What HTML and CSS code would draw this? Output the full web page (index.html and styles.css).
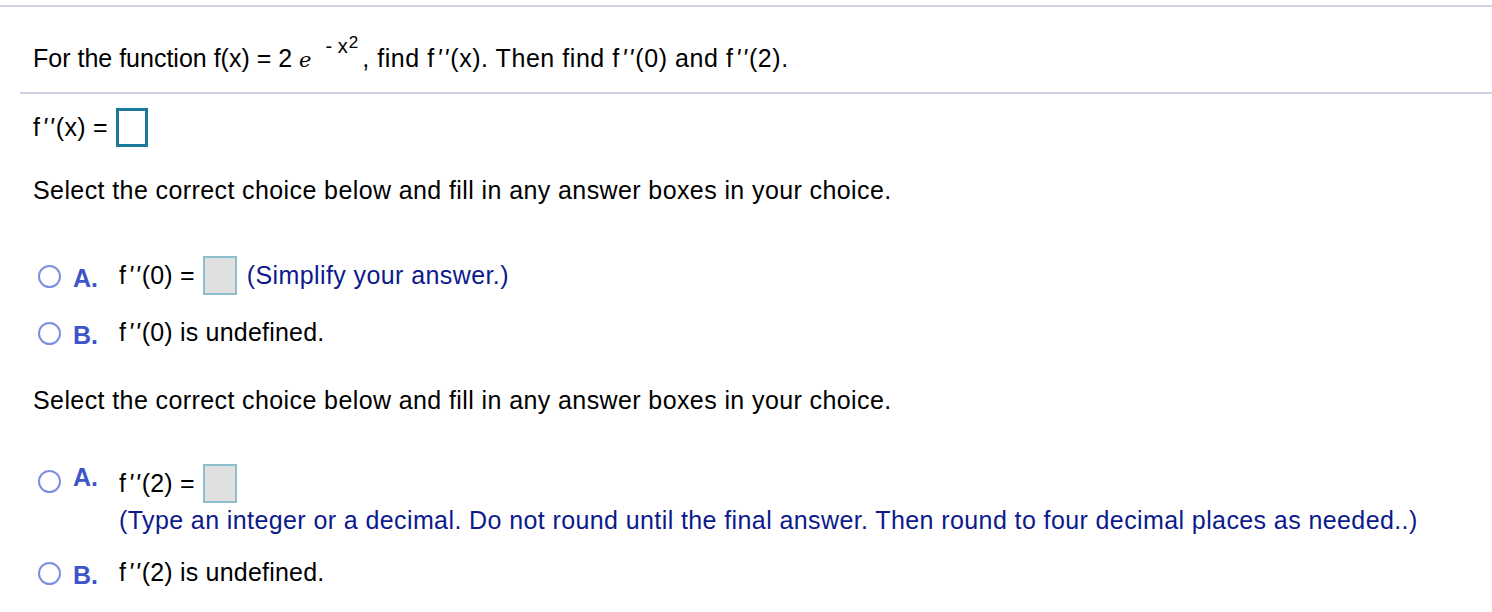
FILE: index.html
```html
<!DOCTYPE html>
<html>
<head>
<meta charset="utf-8">
<link rel="stylesheet" href="styles.css">
</head>
<body>
<div class="page">
  <div class="rule-top"></div>
  <div class="question">For the function f(x) = 2 <span class="e">e</span><span class="exp">- x<sup>2</sup></span><span class="rest">, find f<span class="pr">''</span>(x). Then find f<span class="pr">''</span>(0) and f<span class="pr">''</span>(2).</span></div>
  <div class="rule-mid"></div>
  <div class="answer-row"><span class="math big">f<span class="pr">''</span>(x) =</span><span class="box-active"></span></div>
  <p class="instr instr1">Select the correct choice below and fill in any answer boxes in your choice.</p>
  <div class="choices choices1">
    <div class="choice"><span class="radio"></span><span class="letter">A.</span><span class="math">f<span class="pr">''</span>(0) =</span><span class="box"></span><span class="hint">(Simplify your answer.)</span></div>
    <div class="choice"><span class="radio"></span><span class="letter">B.</span><span class="math">f<span class="pr">''</span>(0) is undefined.</span></div>
  </div>
  <p class="instr instr2">Select the correct choice below and fill in any answer boxes in your choice.</p>
  <div class="choices choices2">
    <div class="choice two-line">
      <span class="radio"></span><span class="letter">A.</span>
      <div class="body">
        <div class="line"><span class="math">f<span class="pr">''</span>(2) =</span><span class="box"></span></div>
        <div class="hint">(Type an integer or a decimal. Do not round until the final answer. Then round to four decimal places as needed..)</div>
      </div>
    </div>
    <div class="choice"><span class="radio"></span><span class="letter">B.</span><span class="math">f<span class="pr">''</span>(2) is undefined.</span></div>
  </div>
</div>
</body>
</html>
```

FILE: styles.css
```css
* { box-sizing: border-box; }
html, body { margin: 0; padding: 0; background: #fff; }
body {
  font-family: "Liberation Sans", Arial, sans-serif;
  font-size: 25px;
  letter-spacing: 0.4px;
  color: #000;
  width: 1492px;
  height: 612px;
  overflow: hidden;
}
.page { padding-top: 5px; }
.rule-top { height: 2px; background: #cfd2e2; }
.pr {
  font-family: "Liberation Sans", Arial, sans-serif;
  font-style: italic;
  font-size: 1em;
  letter-spacing: 2px;
  margin-left: 2px;
}
.question {
  padding: 36px 0 0 33px;
  height: 85px;
  font-size: 25px;
  letter-spacing: 0;
  line-height: 30px;
  white-space: nowrap;
}
.question .e {
  font-family: "DejaVu Serif", "Liberation Serif", serif;
  font-style: italic;
  font-size: 21px;
  margin-left: 0;
}
.question .exp {
  position: relative;
  top: -14px;
  font-size: 20px;
  margin-left: 14px;
  margin-right: 4px;
}
.question sup { font-size: 17px; position: relative; top: -5px; vertical-align: baseline; margin-left: 1px; }
.question .rest { letter-spacing: 0.55px; }
.rule-mid { height: 2px; background: #cfd2e2; margin-left: 20px; }
.answer-row {
  display: flex;
  align-items: center;
  padding-left: 33px;
  margin-top: 14px;
  height: 39px;
}
.math { white-space: nowrap; letter-spacing: 0.2px; }
.math.big { letter-spacing: 0.3px; }
.box-active {
  display: inline-block;
  width: 32px;
  height: 39px;
  border: 3px solid #1b7a9a;
  margin-left: 8px;
  background: #fff;
}
.instr { margin: 0; padding-left: 33px; line-height: 30px; white-space: nowrap; }
.instr1 { margin-top: 28px; }
.choices { padding-left: 38px; }
.choices1 { margin-top: 50px; }
.choice {
  display: flex;
  align-items: center;
  height: 40px;
}
.choice + .choice { margin-top: 17px; }
.radio {
  width: 23px;
  height: 23px;
  border-radius: 50%;
  border: 2.5px solid #7e8fe0;
  margin-right: 12px;
  flex: none;
  position: relative;
  top: 1px;
}
.letter {
  color: #3d55c8;
  font-weight: bold;
  width: 46px;
  flex: none;
  position: relative;
  top: 3px;
  letter-spacing: 0;
}
.box {
  display: inline-block;
  width: 34px;
  height: 39px;
  border: 2px solid #8dbecf;
  background: #e0e0e0;
  margin-left: 8px;
}
.hint { color: #0c1a8c; margin-left: 10px; white-space: nowrap; }
.instr2 { margin-top: 33px; }
.choices2 { margin-top: 48px; }
.choice.two-line { height: auto; align-items: flex-start; }
.two-line .radio { margin-top: 6px; }
.two-line .letter { top: 0px; }
.two-line .body { display: flex; flex-direction: column; }
.two-line .line { display: flex; align-items: center; height: 40px; }
.two-line .hint { margin-left: 0; line-height: 30px; margin-top: 2px; }
.choices2 .choice + .choice { margin-top: 17px; }
```
